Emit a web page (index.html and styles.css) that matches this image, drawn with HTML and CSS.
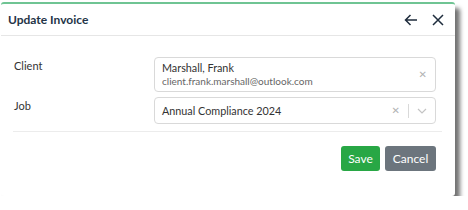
FILE: index.html
```html
<!DOCTYPE html>
<html lang="en">
<head>
    <meta charset="UTF-8">
    <title>Update Invoice</title>
    <link rel="stylesheet" href="styles.css">
</head>
<body>
    <div class="dialog">
        <!-- Header -->
        <div class="dialog-header">
            <h2>Update Invoice</h2>
            <div class="header-actions">
                <button class="icon-btn" title="Back">
                    <svg width="14" height="12" viewBox="0 0 14 12"><path d="M13 6H1.5M6.5 1L1.5 6l5 5" fill="none" stroke="#1f2d3d" stroke-width="1.5"/></svg>
                </button>
                <button class="icon-btn" title="Close">
                    <svg width="12" height="12" viewBox="0 0 12 12"><path d="M1 1l10 10M11 1L1 11" fill="none" stroke="#1f2d3d" stroke-width="1.5"/></svg>
                </button>
            </div>
        </div>

        <!-- Body -->
        <div class="dialog-body">
            <div class="form-row">
                <label>Client</label>
                <div class="select-box client-box">
                    <div class="select-value">
                        <div class="main-text">Marshall, Frank</div>
                        <div class="sub-text">client.frank.marshall@outlook.com</div>
                    </div>
                    <span class="clear">&#x2715;</span>
                </div>
            </div>
            <div class="form-row">
                <label>Job</label>
                <div class="select-box job-box">
                    <div class="select-value">
                        <div class="main-text">Annual Compliance 2024</div>
                    </div>
                    <span class="clear">&#x2715;</span>
                    <span class="divider"></span>
                    <svg class="chevron" width="10" height="6" viewBox="0 0 10 6"><path d="M1 1l4 4 4-4" fill="none" stroke="#c4c4c4" stroke-width="1.2"/></svg>
                </div>
            </div>
        </div>

        <!-- Footer -->
        <div class="dialog-footer">
            <button class="btn btn-save">Save</button>
            <button class="btn btn-cancel">Cancel</button>
        </div>
    </div>
</body>
</html>
```

FILE: styles.css
```css
/* General */
body {
    margin: 0;
    background: #fff;
    font-family: 'Lato', sans-serif;
    color: #333;
}

/* Dialog */
.dialog {
    margin: 2px 0 0 1px;
    width: 454px;
    height: 192px;
    background: #fff;
    border-top: 2px solid #6fc493;
    border-radius: 3px;
    box-shadow: 5px 6px 4px rgba(0, 0, 0, 0.55);
    display: flex;
    flex-direction: column;
}

/* Header */
.dialog-header {
    display: flex;
    align-items: center;
    justify-content: space-between;
    height: 31px;
    padding: 0 11px 0 7px;
    border-bottom: 1px solid #e6e6e6;
}

.dialog-header h2 {
    margin: 0;
    font-size: 12px;
    font-weight: bold;
    color: #243447;
}

.header-actions {
    display: flex;
    gap: 14px;
}

.icon-btn {
    background: none;
    border: none;
    padding: 0;
    display: flex;
    cursor: pointer;
}

/* Body */
.dialog-body {
    margin: 0 13px 0 12px;
    padding: 21px 6px 7px 1px;
    border-bottom: 1px solid #ececec;
}

.form-row {
    display: flex;
    align-items: flex-start;
    margin-bottom: 5px;
}

.form-row:last-child {
    margin-bottom: 0;
}

.form-row label {
    width: 140px;
    font-size: 11px;
    color: #333;
    padding-top: 2px;
}

.select-box {
    flex: 1;
    display: flex;
    align-items: center;
    border: 1px solid #d9d9d9;
    border-radius: 4px;
    padding: 0 8px 0 7px;
    box-sizing: border-box;
}

.client-box {
    height: 35px;
}

.job-box {
    height: 27px;
}

.select-value {
    flex: 1;
}

.main-text {
    font-size: 10.8px;
    color: #333;
    line-height: 14px;
}

.sub-text {
    font-size: 10px;
    color: #666;
    line-height: 13px;
}

.clear {
    font-family: 'DejaVu Sans', sans-serif;
    font-size: 10px;
    color: #b3b3b3;
}

.divider {
    width: 1px;
    height: 14px;
    background: #d9d9d9;
    margin: 0 8px 0 8px;
}

/* Footer */
.dialog-footer {
    display: flex;
    justify-content: flex-end;
    gap: 5px;
    padding: 14px 19px 0 0;
}

.btn {
    border: none;
    border-radius: 3px;
    height: 25px;
    padding: 0 7px;
    color: #fff;
    font-family: 'Lato', sans-serif;
    font-size: 12px;
    cursor: pointer;
}

.btn-save {
    background: #28a745;
    width: 39px;
}

.btn-cancel {
    background: #6c757d;
    width: 51px;
}
```
